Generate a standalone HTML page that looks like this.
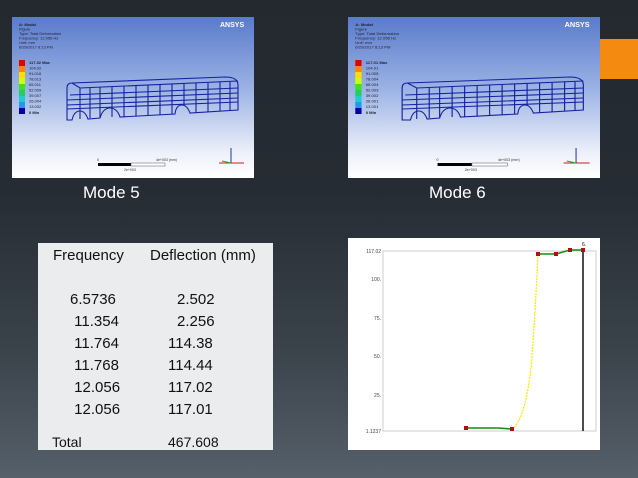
<!DOCTYPE html>
<html><head><style>
html,body{margin:0;padding:0}
body{width:638px;height:478px;overflow:hidden;position:relative;background:linear-gradient(#23292f 0%,#262c33 40%,#3c444c 75%,#56606a 100%);font-family:"Liberation Sans",sans-serif}
.img{position:absolute;top:17px;height:161px;background:linear-gradient(#5a7bcc 0%,#9cb3e4 45%,#eef1fa 85%,#fff 100%)}
.lbl{position:absolute;color:#fff;font-size:17px;top:183px}
.t{position:absolute;font-size:15px;color:#111;line-height:22px}
</style></head><body>
<div style="position:absolute;left:600px;top:39px;width:38px;height:40px;background:#f48a10"></div>

<svg class="img" style="left:12px;width:242px" viewBox="0 0 242 161" preserveAspectRatio="none">
<g font-size="4" fill="#223" font-family="Liberation Sans">
<text x="7" y="9" font-weight="bold">A: Modal</text><text x="7" y="13.5">Figure</text><text x="7" y="18">Type: Total Deformation</text><text x="7" y="22.5">Frequency: 12.056 Hz</text><text x="7" y="27">Unit: mm</text><text x="7" y="31.5">6/29/2017 8:13 PM</text></g>
<g transform="translate(0,-16)" font-size="4" fill="#223" font-family="Liberation Sans">
<text x="17" y="63" font-weight="bold">117.02 Max</text>
<text x="17" y="68.5">104.02</text><text x="17" y="74">91.016</text><text x="17" y="79.5">78.013</text><text x="17" y="85">65.011</text><text x="17" y="90.5">52.009</text><text x="17" y="96">39.007</text><text x="17" y="101.5">26.004</text><text x="17" y="107">13.002</text><text x="17" y="113" font-weight="bold">0 Min</text>
<rect x="7" y="59" width="6" height="6" fill="#d00"/><rect x="7" y="65" width="6" height="6" fill="#f80"/><rect x="7" y="71" width="6" height="6" fill="#fd0"/><rect x="7" y="77" width="6" height="6" fill="#cf0"/><rect x="7" y="83" width="6" height="6" fill="#4d2"/><rect x="7" y="89" width="6" height="6" fill="#2c6"/><rect x="7" y="95" width="6" height="6" fill="#2cc"/><rect x="7" y="101" width="6" height="6" fill="#29e"/><rect x="7" y="107" width="6" height="6" fill="#00a"/></g>
<text x="208" y="10" font-size="7" fill="#fff" font-weight="bold">ANSYS</text>
<g stroke="#1520a0" stroke-width="1.1" fill="none" transform="translate(-12,-17)">
<path d="M67 88 Q67 83 72 83 L225 77 Q238 77 238 85 L238 110 L190 113 Q187 105 182 105 Q176 105 175 114 L120 117 Q117 108 110 108 Q103 108 100 118 L88 119 Q85 111 80 111 Q74 111 72 120 L67 120 Z"/>
<path d="M72 83 L80 88 L238 81 M80 88 L80 119 M67 100 L238 93 M67 105 L238 98 M67 109 L238 102 M70 95 L238 88"/>
<path d="M90 88V118 M100 87V118 M112 87V117 M124 86V117 M136 86V116 M148 85V116 M160 85V115 M172 84V114 M184 84V105 M196 83V113 M208 83V112 M220 82V111 M230 82V110"/>
</g>
<g transform="translate(-1,-2)">
<text x="86" y="146" font-size="3.5" fill="#333">0</text><text x="145" y="146" font-size="3.5" fill="#333">4e+003 (mm)</text>
<rect x="87" y="148" width="33" height="3" fill="#000"/><rect x="120" y="148" width="34" height="3" fill="#fff" stroke="#555" stroke-width=".5"/>
<text x="113" y="156" font-size="3.5" fill="#333">2e+003</text></g>
<g transform="translate(-8,-14)">
<path d="M215 160 H240" stroke="#c22" stroke-width="1"/><path d="M227 160 V145" stroke="#23a" stroke-width="1"/><path d="M227 160 L218 158" stroke="#2a2" stroke-width="1"/></g>
</svg>
<div class="lbl" style="left:83px">Mode 5</div>

<svg class="img" style="left:348px;width:252px" viewBox="0 0 242 161" preserveAspectRatio="none">
<g font-size="4" fill="#223" font-family="Liberation Sans">
<text x="7" y="9" font-weight="bold">A: Modal</text><text x="7" y="13.5">Figure</text><text x="7" y="18">Type: Total Deformation</text><text x="7" y="22.5">Frequency: 12.056 Hz</text><text x="7" y="27">Unit: mm</text><text x="7" y="31.5">6/29/2017 8:13 PM</text></g>
<g transform="translate(0,-16)" font-size="4" fill="#223" font-family="Liberation Sans">
<text x="17" y="63" font-weight="bold">117.01 Max</text>
<text x="17" y="68.5">104.01</text><text x="17" y="74">91.005</text><text x="17" y="79.5">78.004</text><text x="17" y="85">65.004</text><text x="17" y="90.5">52.003</text><text x="17" y="96">39.002</text><text x="17" y="101.5">26.001</text><text x="17" y="107">13.001</text><text x="17" y="113" font-weight="bold">0 Min</text>
<rect x="7" y="59" width="6" height="6" fill="#d00"/><rect x="7" y="65" width="6" height="6" fill="#f80"/><rect x="7" y="71" width="6" height="6" fill="#fd0"/><rect x="7" y="77" width="6" height="6" fill="#cf0"/><rect x="7" y="83" width="6" height="6" fill="#4d2"/><rect x="7" y="89" width="6" height="6" fill="#2c6"/><rect x="7" y="95" width="6" height="6" fill="#2cc"/><rect x="7" y="101" width="6" height="6" fill="#29e"/><rect x="7" y="107" width="6" height="6" fill="#00a"/></g>
<text x="208" y="10" font-size="7" fill="#fff" font-weight="bold">ANSYS</text>
<g stroke="#1520a0" stroke-width="1.1" fill="none" transform="translate(-12,-17)">
<path d="M64 88 Q64 83 69 83 L225 77 Q238 77 238 85 L238 110 L190 113 Q187 105 182 105 Q176 105 175 114 L120 117 Q117 108 110 108 Q103 108 100 118 L88 119 Q85 111 80 111 Q74 111 72 120 L64 120 Z"/>
<path d="M69 83 L78 88 L238 81 M78 88 L78 119 M64 100 L238 93 M64 105 L238 98 M64 109 L238 102 M67 95 L238 88"/>
<path d="M90 88V118 M100 87V118 M112 87V117 M124 86V117 M136 86V116 M148 85V116 M160 85V115 M172 84V114 M184 84V105 M196 83V113 M208 83V112 M220 82V111 M230 82V110"/>
</g>
<g transform="translate(-1,-2)">
<text x="86" y="146" font-size="3.5" fill="#333">0</text><text x="145" y="146" font-size="3.5" fill="#333">4e+003 (mm)</text>
<rect x="87" y="148" width="33" height="3" fill="#000"/><rect x="120" y="148" width="34" height="3" fill="#fff" stroke="#555" stroke-width=".5"/>
<text x="113" y="156" font-size="3.5" fill="#333">2e+003</text></g>
<g transform="translate(-8,-14)">
<path d="M215 160 H240" stroke="#c22" stroke-width="1"/><path d="M227 160 V145" stroke="#23a" stroke-width="1"/><path d="M227 160 L218 158" stroke="#2a2" stroke-width="1"/></g>
</svg>
<div class="lbl" style="left:429px">Mode 6</div>

<div style="position:absolute;left:38px;top:243px;width:235px;height:207px;background:#ebecee"></div>
<div class="t" style="left:53px;top:245px">Frequency</div>
<div class="t" style="left:150px;top:245px">Deflection (mm)</div>
<div class="t" style="left:70px;top:289px">6.5736<br>&nbsp;11.354<br>&nbsp;11.764<br>&nbsp;11.768<br>&nbsp;12.056<br>&nbsp;12.056</div>
<div class="t" style="left:177px;top:289px">2.502<br>2.256</div>
<div class="t" style="left:168px;top:333px">114.38<br>114.44<br>117.02<br>117.01</div>
<div class="t" style="left:52px;top:431px;font-size:14px">Total</div>
<div class="t" style="left:168px;top:431px;font-size:14px">467.608</div>

<svg style="position:absolute;left:348px;top:238px" width="252" height="212" viewBox="0 0 252 212">
<rect width="252" height="212" fill="#fff"/>
<path d="M35 13 H248 V193 H35 Z" fill="none" stroke="#ccc" stroke-width="1"/>
<g font-size="5" fill="#444" font-family="Liberation Sans" text-anchor="end">
<text x="33" y="15">117.02</text><text x="33" y="43">100.</text><text x="33" y="82">75.</text><text x="33" y="120">50.</text><text x="33" y="159">25.</text><text x="33" y="195">1.1237</text></g>
<path d="M164 191 Q178 182 184 120 Q188 60 190 16" stroke="#ee0" stroke-width="1.2" fill="none" stroke-dasharray="2 1"/>
<path d="M118 190 H150 L164 191 M190 16 H208 L222 12 H234" stroke="#1a8a1a" stroke-width="1.6" fill="none"/>
<path d="M235 12 V193" stroke="#111" stroke-width="1.5"/>
<g fill="#b01010"><rect x="116" y="188" width="4" height="4"/><rect x="162" y="189" width="4" height="4"/><rect x="188" y="14" width="4" height="4"/><rect x="206" y="14" width="4" height="4"/><rect x="220" y="10" width="4" height="4"/><rect x="233" y="10" width="4" height="4"/></g>
<text x="234" y="8" font-size="5">6.</text>
</svg>
</body></html>
